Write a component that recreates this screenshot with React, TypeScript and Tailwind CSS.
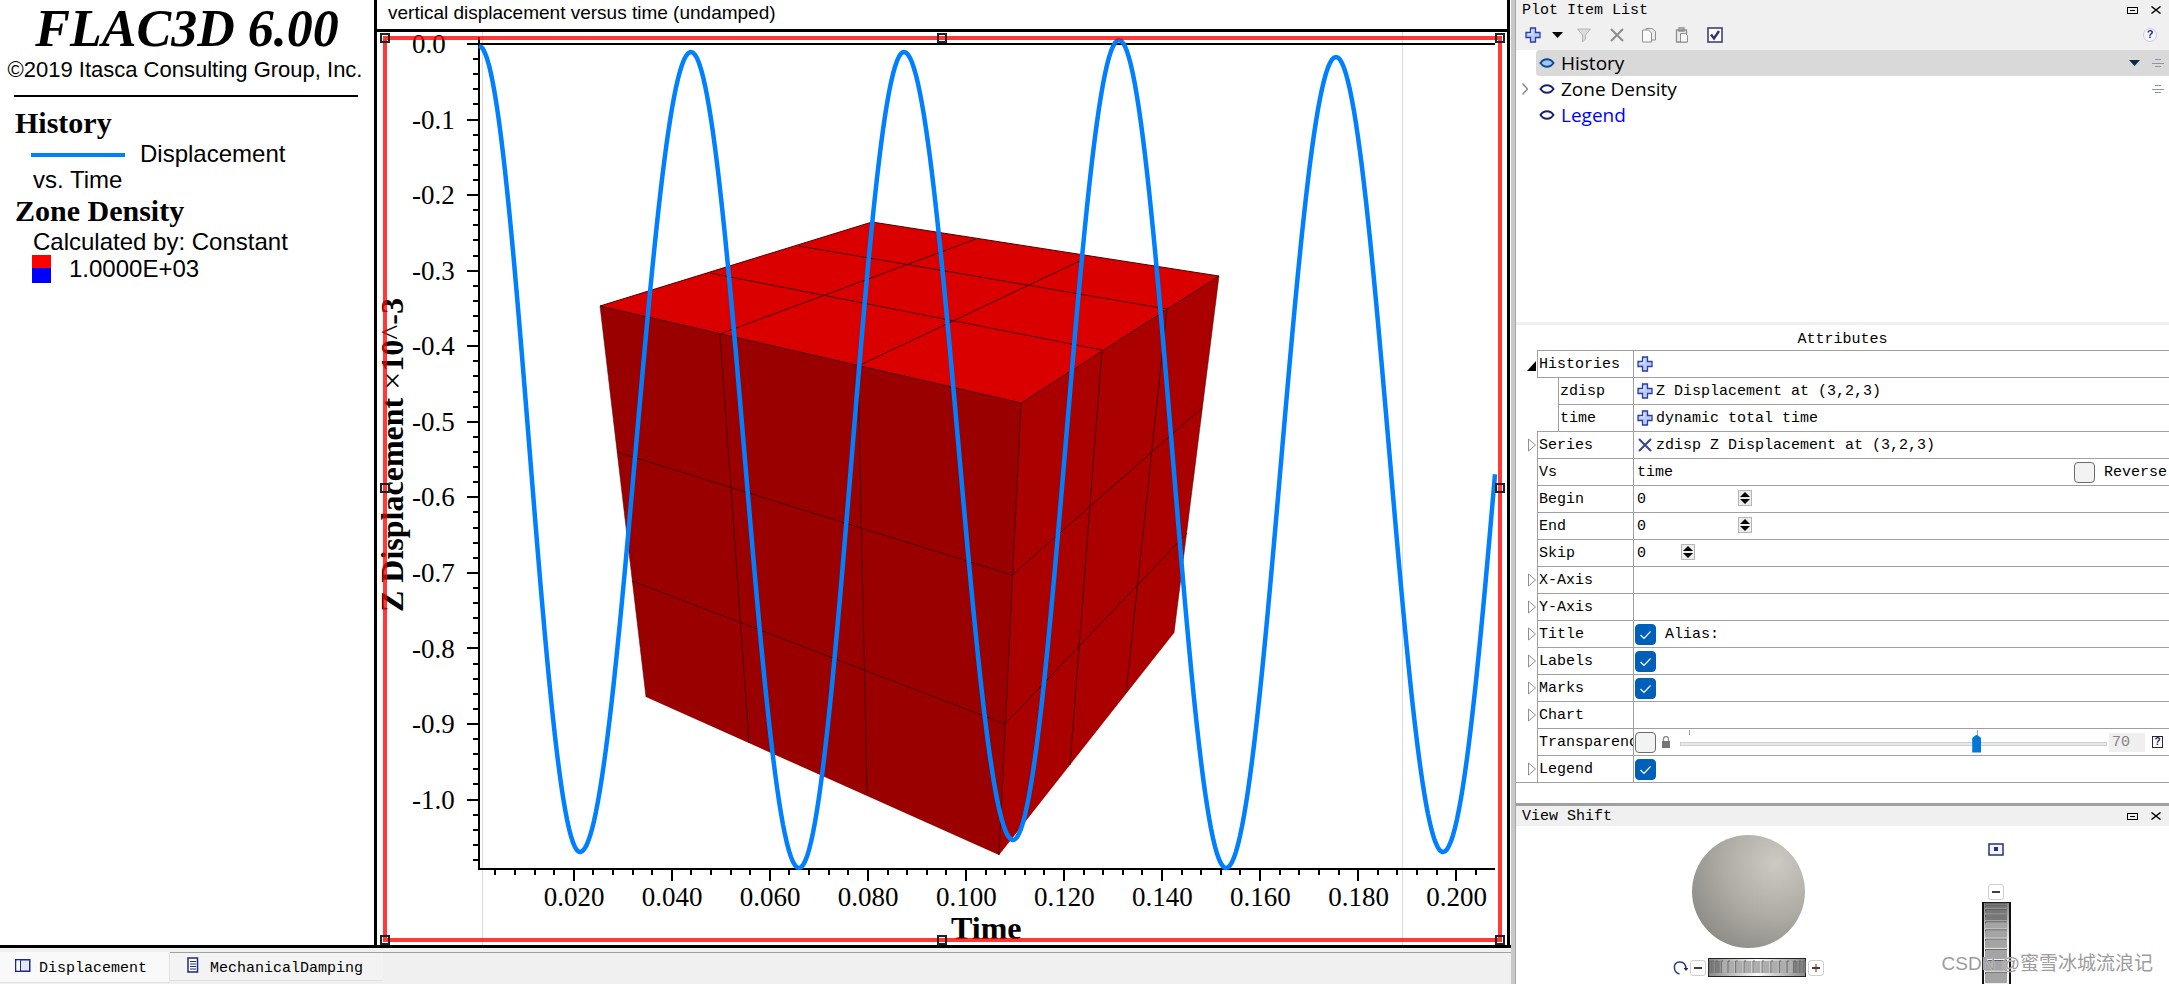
import { useState, type ReactNode } from 'react'

/* ---------- chart data ---------- */

// Turning points of the undamped oscillation, in chart units
const EXTREMA: [number, number][] = [
  [479, 46],
  [580, 852],
  [691, 52],
  [799, 868],
  [904, 52],
  [1013, 840],
  [1119, 40],
  [1226, 868],
  [1336, 57],
  [1443, 852],
  [1551, 50],
]

const CURVE_END = 1495

function buildCurve() {
  const pts: string[] = []
  for (let i = 0; i < EXTREMA.length - 1; i++) {
    const [x0, y0] = EXTREMA[i]
    const [x1, y1] = EXTREMA[i + 1]
    for (let x = x0; x < x1 && x <= CURVE_END; x += 2) {
      const u = (x - x0) / (x1 - x0)
      pts.push(`${x},${(y0 + ((y1 - y0) * (1 - Math.cos(Math.PI * u))) / 2).toFixed(1)}`)
    }
  }
  return pts.join(' ')
}

const CURVE = buildCurve()
const Y_LABELS = ['0.0', '-0.1', '-0.2', '-0.3', '-0.4', '-0.5', '-0.6', '-0.7', '-0.8', '-0.9', '-1.0']
const X_LABELS = ['0.020', '0.040', '0.060', '0.080', '0.100', '0.120', '0.140', '0.160', '0.180', '0.200']

const CUBE_EDGES: [number, number, number, number][] = [
  // top
  [710, 273, 1102, 350],
  [799, 246, 1167, 309],
  [720, 334, 976, 239],
  [858, 366, 1084, 259],
  // left side
  [720, 334, 749, 743],
  [858, 366, 867, 795],
  [617, 452, 1012, 575],
  [632, 581, 1005, 724],
  // right side
  [1102, 350, 1070, 765],
  [1167, 309, 1126, 693],
  [1012, 575, 1202, 408],
  [1005, 724, 1187, 533],
]

function Cube() {
  return (
    <g>
      <polygon points="600,306 872,222 1219,276 1021,403" fill="#db0000" />
      <polygon points="600,306 1021,403 999,855 646,697" fill="#9b0000" />
      <polygon points="1021,403 1219,276 1174,633 999,855" fill="#aa0000" />
      <g stroke="#4a0000" strokeWidth="1" fill="none">
        <path d="M600 306 872 222 1219 276 1021 403ZM1021 403 999 855" />
        <path d="M600 306 646 697M1219 276 1174 633" strokeOpacity="0.5" />
        {CUBE_EDGES.map(([x1, y1, x2, y2]) => (
          <line key={`${x1}-${y1}-${x2}`} x1={x1} y1={y1} x2={x2} y2={y2} />
        ))}
      </g>
    </g>
  )
}

function Axes() {
  const yMinor = Array.from({ length: 55 }, (_, i) => 44 + i * 15.11)
  const xMinor = Array.from({ length: 51 }, (_, i) => 495.3 + i * 19.61)
  return (
    <g>
      <g stroke="#000" strokeWidth="2" shapeRendering="crispEdges">
        <line x1="479" y1="37" x2="479" y2="870" />
        <line x1="467" y1="44" x2="1495" y2="44" />
        <line x1="478" y1="869" x2="1495" y2="869" />
        {yMinor.map((y, i) => (
          <line key={y} x1={i % 5 === 0 ? 467 : 473} x2="479" y1={y} y2={y} />
        ))}
        {xMinor.map((x, i) => (
          <line key={x} x1={x} x2={x} y1="869" y2={i % 5 === 4 ? 881 : 875} />
        ))}
      </g>
      <g fontSize="27" fontFamily="'Liberation Serif', serif">
        {Y_LABELS.map((t, i) => (
          <text key={t} x="412" y={53 + i * 75.57}>{t}</text>
        ))}
        {X_LABELS.map((t, i) => (
          <text key={t} x={574 + i * 98.07} y="906" textAnchor="middle">{t}</text>
        ))}
      </g>
      <g fontSize="32" fontWeight="bold" fontFamily="'Liberation Serif', serif">
        <text x="951" y="939">Time</text>
        <text transform="translate(403 612) rotate(-90)">
          Z Displacement <tspan fontWeight="normal">×</tspan>10<tspan fontWeight="normal">^</tspan>-3
        </text>
      </g>
    </g>
  )
}

function PlotCanvas() {
  const handles = [385, 942, 1500].flatMap((x) => [38, 488, 940].map((y) => [x, y]))
  return (
    <svg viewBox="377 32 1130 913" className="block h-full w-full overflow-visible" role="img" aria-label="Z displacement versus time">
      <path d="M482.500 32V945M1402.500 32V945" stroke="#dcdcdc" />
      <Cube />
      <Axes />
      <polyline points={CURVE} fill="none" stroke="#0080ff" strokeWidth="4.500" strokeLinejoin="round" />
      <rect x="385" y="38" width="1115" height="902" fill="none" stroke="#ff0000" strokeOpacity="0.78" strokeWidth="4" />
      {handles
        .filter(([x, y]) => !(x === 942 && y === 488))
        .map(([x, y]) => (
          <rect key={`${x}-${y}`} x={x - 4} y={y - 4} width="8" height="8" fill="none" stroke="#222" strokeWidth="2" />
        ))}
    </svg>
  )
}

/* ---------- legend ---------- */

function LegendPanel() {
  return (
    <aside className="w-[374px] shrink-0 bg-white font-['Liberation_Sans',sans-serif] text-[24px] leading-[26px] whitespace-nowrap">
      <h1 className="text-center font-['Liberation_Serif',serif] text-[52px] leading-[58px] font-bold italic">FLAC3D 6.00</h1>
      <p className="pr-[4px] text-center text-[22px] leading-[24px]">©2019 Itasca Consulting Group, Inc.</p>
      <hr className="mr-[16px] ml-[14px] mt-[13px] mb-[8px] border-t-2 border-black" />
      <h2 className="pl-[15px] font-['Liberation_Serif',serif] text-[30px] leading-[36px] font-bold">History</h2>
      <div className="flex items-center gap-[15px] pl-[31px]">
        <span className="mt-[2px] h-[4px] w-[94px] bg-[#0080ff]" />
        <span>Displacement</span>
      </div>
      <p className="pl-[33px]">vs. Time</p>
      <h2 className="pl-[15px] font-['Liberation_Serif',serif] text-[30px] leading-[36px] font-bold">Zone Density</h2>
      <p className="pl-[33px]">Calculated by: Constant</p>
      <div className="flex items-center gap-[18px] pl-[32px]">
        <span className="flex h-[28px] w-[19px] flex-col">
          <span className="h-[13px] bg-[#ff0000]" />
          <span className="h-[15px] bg-[#0000ff]" />
        </span>
        <span>1.0000E+03</span>
      </div>
    </aside>
  )
}

/* ---------- icons ---------- */

function PlusIcon() {
  return (
    <svg width="16" height="16" viewBox="0 0 16 16" className="shrink-0">
      <path d="M5.500 1h5v4.500H15v5h-4.500V15h-5v-4.500H1v-5h4.500Z" fill="#b9cdfa" stroke="#2e3d9e" strokeWidth="1.300" />
      <path d="M7 3v4H3" fill="none" stroke="#e6eeff" />
    </svg>
  )
}

function CrossIcon({ color }: { color: string }) {
  return (
    <svg width="16" height="16" viewBox="0 0 16 16" className="shrink-0">
      <path d="M2 2 14 14M14 2 2 14" stroke={color} strokeWidth="2" />
    </svg>
  )
}

function EyeIcon({ active }: { active?: boolean }) {
  return (
    <svg width="16" height="12" viewBox="0 0 16 12" className="shrink-0">
      <path d="M1.500 6C5 1 11 1 14.500 6 11 11 5 11 1.500 6Z" fill={active ? '#9cc8f5' : '#fff'} stroke={active ? '#15498f' : '#1a1f6b'} strokeWidth="2" />
    </svg>
  )
}

function Caret({ color = '#000' }: { color?: string }) {
  return (
    <svg width="11" height="6" viewBox="0 0 11 6">
      <path d="M0 0h11L5.500 6Z" fill={color} />
    </svg>
  )
}

function DragHandle() {
  return (
    <svg width="12" height="10" viewBox="0 0 12 10" className="shrink-0" shapeRendering="crispEdges">
      <path d="M3 1.500h6M0 5h12M3 8.500h6" stroke="#8a98a4" />
    </svg>
  )
}

function WindowButtons() {
  return (
    <div className="flex items-center gap-[13px] pr-[8px]">
      <button type="button" aria-label="Float">
        <svg width="11" height="8" viewBox="0 0 11 8" className="block" shapeRendering="crispEdges">
          <path d="M.5 1.500h10v6H.5Z" fill="none" stroke="#000" />
          <path d="M3 4.500h5" stroke="#000" />
        </svg>
      </button>
      <button type="button" aria-label="Close">
        <svg width="10" height="8" viewBox="0 0 10 8" className="block">
          <path d="M.5 .5 9.500 7.500M9.500 .5 .5 7.500" stroke="#000" strokeWidth="1.400" />
        </svg>
      </button>
    </div>
  )
}

/* ---------- plot item list ---------- */

function Toolbar() {
  return (
    <div className="flex h-[30px] items-center pb-[1px] pl-[9px]">
      <button type="button" aria-label="Add item"><PlusIcon /></button>
      <button type="button" aria-label="More items" className="ml-[11px]"><Caret /></button>
      <button type="button" aria-label="Filter" className="ml-[13px]">
        <svg width="16" height="16" viewBox="0 0 16 16">
          <path d="M1.500 2h13L9.500 8v4l-3 3V8Z" fill="#dcdcdc" stroke="#b4b4b4" />
        </svg>
      </button>
      <button type="button" aria-label="Delete" className="ml-[17px]"><CrossIcon color="#8c8c8c" /></button>
      <button type="button" aria-label="Copy" className="ml-[16px]">
        <svg width="16" height="16" viewBox="0 0 16 16">
          <path d="M5 1.500h6l3.500 3V13H5Z" fill="#ececec" stroke="#8e8e8e" />
          <path d="M1.500 3h6L10.500 6v9h-9Z" fill="#fafafa" stroke="#8e8e8e" />
        </svg>
      </button>
      <button type="button" aria-label="Paste" className="ml-[17px]">
        <svg width="16" height="16" viewBox="0 0 16 16">
          <path d="M2.500 3h10v12h-10ZM5 1h5v3H5Z" fill="#ececec" stroke="#8e8e8e" strokeWidth="1.300" />
          <path d="M6.500 6.500h5l2 2V15h-7Z" fill="#fafafa" stroke="#8e8e8e" />
        </svg>
      </button>
      <button type="button" aria-label="Toggle all" className="ml-[17px]">
        <svg width="16" height="16" viewBox="0 0 16 16">
          <path d="M1 1h14v14H1Z" fill="#fff" stroke="#33307a" strokeWidth="1.500" />
          <path d="M4 7.500 7 11.500 12 4" fill="none" stroke="#33307a" strokeWidth="2.400" />
        </svg>
      </button>
      <button type="button" aria-label="Help" className="mr-[12px] ml-auto flex h-[14px] w-[14px] items-center justify-center rounded-full border border-[#c3c8e6] bg-[#f6f7fd] font-['Liberation_Sans',sans-serif] text-[11px] leading-none font-bold text-[#26307c]">
        ?
      </button>
    </div>
  )
}

function PlotItems() {
  return (
    <ul className="flex-1 bg-white font-['Open_Sans',sans-serif] text-[19px] leading-[26px]">
      <li className="ml-[20px] flex h-[26px] items-center gap-[6px] rounded-l-sm bg-[#d9d9d9] pr-[5px] pl-[3px]">
        <EyeIcon active />
        <span className="flex-1">History</span>
        <button type="button" aria-label="History menu" className="mr-[6px]"><Caret color="#0b2a4a" /></button>
        <DragHandle />
      </li>
      <li className="flex h-[26px] items-center gap-[6px] pr-[5px] pl-[6px]">
        <button type="button" aria-label="Expand Zone Density" className="mr-[5px]">
          <svg width="6" height="12" viewBox="0 0 6 12" className="block">
            <path d="M.5 .5 5.500 6 .5 11.500" fill="none" stroke="#8a8a8a" strokeWidth="1.500" />
          </svg>
        </button>
        <EyeIcon />
        <span className="flex-1">Zone Density</span>
        <DragHandle />
      </li>
      <li className="flex h-[26px] items-center gap-[6px] pl-[23px] text-[#0000ff]">
        <EyeIcon />
        <span>Legend</span>
      </li>
    </ul>
  )
}

/* ---------- attributes ---------- */

function Check({ label, initial = false }: { label: string; initial?: boolean }) {
  const [on, setOn] = useState(initial)
  return (
    <span className="relative inline-flex shrink-0">
      <input
        type="checkbox"
        aria-label={label}
        checked={on}
        onChange={(e) => setOn(e.target.checked)}
        className="h-[21px] w-[21px] appearance-none rounded-[4px] border border-[#6b6b6b] bg-[#f3f3f3] checked:border-[#005fb8] checked:bg-[#005fb8]"
      />
      {on && (
        <svg width="21" height="21" viewBox="0 0 21 21" className="pointer-events-none absolute inset-0">
          <path d="M5.500 11 9 14.500 15.500 7.500" fill="none" stroke="#fff" strokeWidth="1.200" />
        </svg>
      )}
    </span>
  )
}

function Spinner({ label, narrow }: { label: string; narrow?: boolean }) {
  const [value, setValue] = useState(0)
  return (
    <div className="flex items-center pl-[3px]">
      <input
        aria-label={label}
        value={value}
        onChange={(e) => setValue(Number(e.target.value) || 0)}
        className={narrow ? 'w-[44px] pt-[2px] outline-none' : 'w-[101px] pt-[2px] outline-none'}
      />
      <div className="mb-[3px] flex h-[16px] w-[14px] flex-col border border-[#b5b5b5] bg-[#ececec]">
        <button type="button" aria-label={`Increase ${label}`} onClick={() => setValue(value + 1)} className="flex flex-1 items-center justify-center">
          <svg width="10" height="5" viewBox="0 0 10 5"><path d="M0 5h10L5 0Z" /></svg>
        </button>
        <button type="button" aria-label={`Decrease ${label}`} onClick={() => setValue(value - 1)} className="flex flex-1 items-center justify-center">
          <svg width="10" height="5" viewBox="0 0 10 5"><path d="M0 0h10L5 5Z" /></svg>
        </button>
      </div>
    </div>
  )
}

function Transparency() {
  const [value, setValue] = useState(70)
  return (
    <div className="flex items-center pr-[6px] pl-[1px]">
      <Check label="Transparency" />
      <svg width="8" height="12" viewBox="0 0 8 12" className="ml-[6px] shrink-0">
        <path d="M1.500 6V3a2.500 2.500 0 0 1 5 0v3" fill="none" stroke="#8a8a8a" strokeWidth="1.300" />
        <rect y="5" width="8" height="7" fill="#757575" />
      </svg>
      <div className="relative ml-[10px] flex h-[24px] flex-1 items-center">
        <span className="absolute top-0 left-[9px] h-[5px] w-px bg-[#a0a0a0]" />
        <span className="absolute top-0 left-[calc(70%-2px)] h-[5px] w-px bg-[#a0a0a0]" />
        <input
          type="range"
          aria-label="Transparency amount"
          min={0}
          max={100}
          value={value}
          onChange={(e) => setValue(Number(e.target.value))}
          className="relative mt-[3px] h-[19px] w-full appearance-none bg-transparent [&::-webkit-slider-runnable-track]:h-[4px] [&::-webkit-slider-runnable-track]:border [&::-webkit-slider-runnable-track]:border-[#cfcfcf] [&::-webkit-slider-runnable-track]:bg-[#e7eaea] [&::-webkit-slider-thumb]:mt-[-8px] [&::-webkit-slider-thumb]:h-[18px] [&::-webkit-slider-thumb]:w-[9px] [&::-webkit-slider-thumb]:appearance-none [&::-webkit-slider-thumb]:bg-[#0078d7] [&::-webkit-slider-thumb]:[clip-path:polygon(50%_0,100%_20%,100%_100%,0_100%,0_20%)]"
        />
      </div>
      <output className="ml-[2px] w-[36px] bg-[#efefef] pl-[3px] text-[15px] leading-[19px] text-[#848484]">{value}</output>
      <button type="button" aria-label="Transparency help" className="ml-[7px] flex h-[12px] w-[11px] items-center justify-center border border-[#25253f] font-['Liberation_Sans',sans-serif] text-[10px] leading-none font-bold text-[#25253f]">
        ?
      </button>
    </div>
  )
}

function HistoryValue({ text, cross }: { text: string; cross?: boolean }) {
  return (
    <div className="flex items-center gap-[3px] pl-[3px]">
      <button type="button" aria-label={cross ? 'Remove series' : 'Add history'}>
        {cross ? <CrossIcon color="#3b4486" /> : <PlusIcon />}
      </button>
      {text && <span className="pt-[2px]">{text}</span>}
    </div>
  )
}

type Attribute = {
  name: string
  expand?: 'open' | 'closed'
  child?: 'first' | 'next'
  value?: ReactNode
}

const ATTRIBUTES: Attribute[] = [
  { name: 'Histories', expand: 'open', value: <HistoryValue text="" /> },
  { name: 'zdisp', child: 'first', value: <HistoryValue text="Z Displacement at (3,2,3)" /> },
  { name: 'time', child: 'next', value: <HistoryValue text="dynamic total time" /> },
  { name: 'Series', expand: 'closed', value: <HistoryValue text="zdisp Z Displacement at (3,2,3)" cross /> },
  {
    name: 'Vs',
    value: (
      <div className="flex items-center justify-between pr-[2px] pl-[3px]">
        <span className="pt-[2px]">time</span>
        <label className="flex items-center gap-[9px]">
          <Check label="Reverse" />
          <span className="pt-[2px]">Reverse</span>
        </label>
      </div>
    ),
  },
  { name: 'Begin', value: <Spinner label="Begin" /> },
  { name: 'End', value: <Spinner label="End" /> },
  { name: 'Skip', value: <Spinner label="Skip" narrow /> },
  { name: 'X-Axis', expand: 'closed' },
  { name: 'Y-Axis', expand: 'closed' },
  {
    name: 'Title',
    expand: 'closed',
    value: (
      <div className="flex items-center gap-[9px] pl-[1px]">
        <Check label="Title" initial />
        <span className="pt-[2px]">Alias:</span>
      </div>
    ),
  },
  { name: 'Labels', expand: 'closed', value: <div className="flex pl-[1px]"><Check label="Labels" initial /></div> },
  { name: 'Marks', expand: 'closed', value: <div className="flex pl-[1px]"><Check label="Marks" initial /></div> },
  { name: 'Chart', expand: 'closed' },
  { name: 'Transparency', value: <Transparency /> },
  { name: 'Legend', expand: 'closed', value: <div className="flex pl-[1px]"><Check label="Legend" initial /></div> },
]

function Expander({ state }: { state: 'open' | 'closed' }) {
  return (
    <button type="button" aria-label={state === 'open' ? 'Collapse' : 'Expand'} className="mr-[1px] ml-auto block">
      {state === 'open' ? (
        <svg width="9" height="10" viewBox="0 0 9 10" className="mt-[4px] block"><path d="M9 0v10H0Z" /></svg>
      ) : (
        <svg width="8" height="14" viewBox="0 0 8 14" className="block">
          <path d="M.5 1v12L7.500 7Z" fill="#fff" stroke="#8f8f8f" />
        </svg>
      )}
    </button>
  )
}

function AttributeTable() {
  return (
    <table className="w-full table-fixed border-separate border-spacing-0 border-b border-[#a0a0a0]">
      <caption className="h-[25px] pt-[5px] text-center leading-[20px]">Attributes</caption>
      <colgroup>
        <col className="w-[21px]" />
        <col className="w-[21px]" />
        <col className="w-[75px]" />
        <col />
      </colgroup>
      <tbody>
        {ATTRIBUTES.map((a) => (
          <tr key={a.name} className="h-[27px]">
            <td className="p-0">{a.expand && <Expander state={a.expand} />}</td>
            {a.child && <td className={a.child === 'first' ? 'border-t border-[#a0a0a0] p-0' : 'p-0'} />}
            <th scope="row" colSpan={a.child ? 1 : 2} className="overflow-hidden border-t border-l border-[#a0a0a0] p-0 pt-[2px] pl-[1px] text-left font-normal whitespace-nowrap">
              {a.name}
            </th>
            <td className="border-t border-l border-[#a0a0a0] p-0">{a.value}</td>
          </tr>
        ))}
      </tbody>
    </table>
  )
}

/* ---------- view shift ---------- */

// Ribs bunch up towards both ends of the wheel, as on a turned cylinder
function ribs(count: number, size: number) {
  return Array.from({ length: count + 1 }, (_, i) => {
    const a = -Math.PI / 2 + (Math.PI * (i + 1)) / (count + 2)
    return size / 2 + (Math.sin(a) * size) / 2
  })
}

function HorizontalWheel() {
  const stops = ribs(15, 98)
  return (
    <svg width="98" height="19" viewBox="0 0 98 19" role="img" aria-label="Roll wheel">
      <defs>
        <linearGradient id="wheelH">
          <stop offset="0" stopColor="#8a8a8a" />
          <stop offset="0.500" stopColor="#fafafa" />
          <stop offset="1" stopColor="#8a8a8a" />
        </linearGradient>
      </defs>
      <rect width="98" height="19" fill="#222" />
      <rect x="1" y="1" width="96" height="17" fill="url(#wheelH)" />
      {stops.slice(0, -1).map((s, i) => (
        <rect key={s} x={s + 1} y="3" width={Math.max(stops[i + 1] - s - 2, 1)} height="12" fill={i < 3 || i > 11 ? '#7c7c7c' : '#adadad'} />
      ))}
      {stops.map((s) => (
        <path key={s} d={`M${s + 0.5} 15V3h2`} fill="none" stroke="#666" strokeWidth="1" />
      ))}
    </svg>
  )
}

function VerticalWheel() {
  const stops = ribs(23, 202)
  return (
    <svg width="29" height="202" viewBox="0 0 29 202" role="img" aria-label="Zoom wheel">
      <defs>
        <linearGradient id="wheelV" x2="0" y2="1">
          <stop offset="0" stopColor="#888" />
          <stop offset="0.200" stopColor="#f4f4f4" />
          <stop offset="0.600" stopColor="#f4f4f4" />
          <stop offset="1" stopColor="#888" />
        </linearGradient>
      </defs>
      <rect width="29" height="202" fill="#111" />
      <rect x="2" y="1" width="25" height="201" fill="url(#wheelV)" />
      {stops.slice(0, -1).map((s, i) => (
        <rect key={s} x="3" y={s + 1} width="22" height={Math.max(stops[i + 1] - s - 2, 1)} fill={i < 4 ? '#777' : '#a4a4a4'} />
      ))}
      {stops.map((s) => (
        <path key={s} d={`M3.500 ${s + 2}v-1.500H25`} fill="none" stroke="#5c5c5c" strokeWidth="1" />
      ))}
    </svg>
  )
}

function StepButton({ label, plus }: { label: string; plus?: boolean }) {
  return (
    <button type="button" aria-label={label} className="flex h-[16px] w-[16px] items-center justify-center rounded-[3px] border border-[#cfcfcf] bg-white">
      <svg width="8" height="8" viewBox="0 0 8 8">
        <path d="M0 4h8" stroke="#000" strokeWidth="1.500" />
        {plus && <path d="M4 0v8" stroke="#8a3030" strokeWidth="1.200" />}
      </svg>
    </button>
  )
}

function ViewShift() {
  return (
    <div className="relative grid h-[158px] grid-cols-[308px_1fr] overflow-hidden bg-white">
      <div className="flex flex-col items-end pt-[9px]">
        <div className="mr-[19px] h-[113px] w-[113px] rounded-full bg-[radial-gradient(circle_at_74%_25%,#cdcac3_0%,#aeaba4_45%,#8a8983_85%)]" />
        <div className="mt-[10px] flex items-center gap-[2px]">
          <button type="button" aria-label="Reset roll">
            <svg width="15" height="16" viewBox="0 0 15 16" className="block">
              <path d="M6.500 14C0 12.500-.5 3 6 2c5-.5 7 3 7 7" fill="none" stroke="#2c3a86" strokeWidth="1.500" />
              <path d="M10.500 8h5L13 11Z" fill="#1d2a78" />
            </svg>
          </button>
          <StepButton label="Roll left" />
          <HorizontalWheel />
          <StepButton label="Roll right" plus />
        </div>
      </div>
      <div className="flex flex-col items-start pl-[158px]">
        <button type="button" aria-label="Reset zoom" className="mt-[17px] ml-[6px]">
          <svg width="16" height="13" viewBox="0 0 16 13" className="block">
            <path d="M1 1h14v11H1Z" fill="#f4f5ff" stroke="#26307c" strokeWidth="1.500" />
            <rect x="6" y="4" width="4" height="4" fill="#26307c" />
          </svg>
        </button>
        <div className="mt-[28px] mb-[2px] ml-[6px]"><StepButton label="Zoom out" /></div>
        <VerticalWheel />
      </div>
      <p className="absolute right-[16px] bottom-[6px] font-['Liberation_Sans','Noto_Sans_CJK_SC',sans-serif] text-[19px] leading-[28px] whitespace-nowrap text-[#9c9c9c] text-shadow-[0_0_1px_#ffffff]">
        CSDN @蜜雪冰城流浪记
      </p>
    </div>
  )
}

/* ---------- tabs ---------- */

function PlotTabs() {
  return (
    <nav className="flex h-[36px] items-start bg-[#f0f0f0] pt-[4px]">
      <button type="button" className="flex h-[31px] w-[170px] items-center gap-[8px] border-r border-b border-[#e2e2e2] bg-[#f9f9f9] pl-[15px]">
        <svg width="16" height="13" viewBox="0 0 16 13" className="mb-[3px]">
          <path d="M.75 .75h14v11.500h-14Z" fill="#e4e6f7" stroke="#1c2a80" strokeWidth="1.500" />
          <path d="M1.500 1.500H5v10H1.500Z" fill="#fff" />
          <path d="M5.500 1v11" stroke="#1c2a80" />
        </svg>
        <span className="pt-[4px]">Displacement</span>
      </button>
      <div className="flex flex-1 border-t border-[#a0a0a0]">
        <button type="button" className="flex h-[28px] w-[213px] items-center gap-[11px] border-b border-[#e2e2e2] bg-[#f3f3f3] pl-[17px]">
          <svg width="12" height="16" viewBox="0 0 12 16" className="mb-[3px]">
            <path d="M1 1h9.500v14H1Z" fill="#fff" stroke="#1c2a80" strokeWidth="1.500" />
            <path d="M3 4.500h6M3 7h6M3 9.500h6M3 12h6" stroke="#1c2a80" />
          </svg>
          <span className="pt-[4px]">MechanicalDamping</span>
        </button>
      </div>
    </nav>
  )
}

export default function App() {
  return (
    <div className="flex h-screen w-full overflow-hidden bg-[#f0f0f0] font-['Liberation_Mono',monospace] text-[15px] leading-[20px] text-black">
      <main className="flex min-w-0 flex-1 flex-col">
        <div className="flex min-h-0 flex-1 border-b-[3px] border-black bg-white">
          <LegendPanel />
          <section className="mr-[1px] flex min-w-0 flex-1 flex-col border-x-[3px] border-black">
            <h2 className="h-[32px] border-b-[3px] border-black pl-[11px] font-['Liberation_Sans',sans-serif] text-[19px] leading-[25px]">
              vertical displacement versus time (undamped)
            </h2>
            <div className="min-h-0 flex-1">
              <PlotCanvas />
            </div>
          </section>
        </div>
        <PlotTabs />
      </main>

      <div className="w-[5px] shrink-0 border-r border-[#a6a6a6] bg-[#c8c8c8]" />

      <aside className="flex w-[653px] shrink-0 flex-col">
        <div className="flex h-[20px] items-center justify-between pl-[6px]">
          <h2 className="pt-[2px]">Plot Item List</h2>
          <WindowButtons />
        </div>
        <Toolbar />
        <PlotItems />
        <div className="mt-[3px] bg-white pb-[20px]">
          <AttributeTable />
        </div>
        <div className="flex h-[23px] items-center justify-between border-t-[3px] border-[#a0a0a0] pl-[6px]">
          <h2 className="pt-[2px]">View Shift</h2>
          <WindowButtons />
        </div>
        <ViewShift />
      </aside>
    </div>
  )
}
